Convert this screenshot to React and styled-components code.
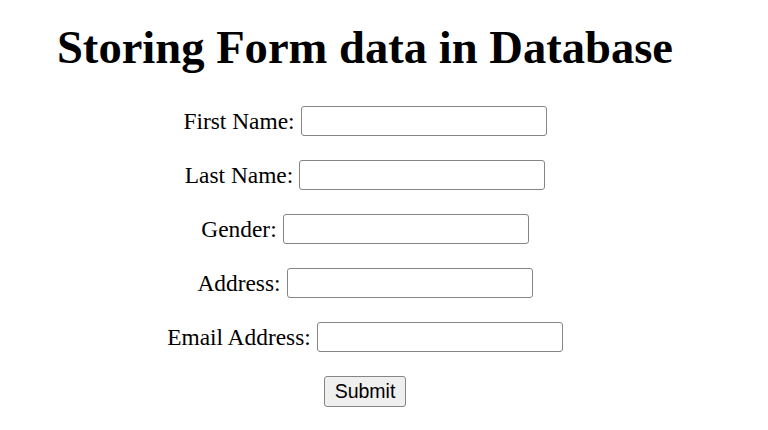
import React from 'react';
import styled, { createGlobalStyle } from 'styled-components';

const GlobalStyle = createGlobalStyle`
  body {
    margin: 0;
    background: #ffffff;
    font-family: 'Liberation Serif', 'Times New Roman', serif;
    color: #000000;
  }
`;

const Page = styled.div`
  width: 730px;
  padding-top: 24px;
  text-align: center;
`;

const Title = styled.h1`
  margin: 0 0 36px;
  font-size: 46.6px;
  line-height: 46px;
  font-weight: 700;
`;

const Form = styled.form`
  display: flex;
  flex-direction: column;
  align-items: center;
  gap: 24px;
`;

const Row = styled.div`
  display: flex;
  align-items: center;
  justify-content: center;
  gap: 6px;
  height: 30px;
`;

const Label = styled.label`
  font-size: 23.4px;
  line-height: 30px;
`;

const Input = styled.input`
  box-sizing: border-box;
  width: 246px;
  height: 30px;
  padding: 2px 4px;
  border: 1.5px solid #858585;
  border-radius: 3px;
  background: #ffffff;
  font-family: 'Liberation Sans', Arial, sans-serif;
  font-size: 19px;
`;

const Button = styled.button`
  box-sizing: border-box;
  width: 82px;
  height: 31px;
  padding: 0 8px;
  border: 1.5px solid #858585;
  border-radius: 3px;
  background: #efefef;
  color: #000000;
  font-family: 'Liberation Sans', Arial, sans-serif;
  font-size: 19.5px;
`;

const fields = [
  { id: 'first_name', label: 'First Name:' },
  { id: 'last_name', label: 'Last Name:' },
  { id: 'gender', label: 'Gender:' },
  { id: 'address', label: 'Address:' },
  { id: 'email', label: 'Email Address:' },
];

const App = () => {
  return (
    <Page>
      <GlobalStyle />
      <Title>Storing Form data in Database</Title>
      <Form onSubmit={e => e.preventDefault()}>
        {fields.map(field => (
          <Row key={field.id}>
            <Label htmlFor={field.id}>{field.label}</Label>
            <Input type="text" id={field.id} name={field.id} />
          </Row>
        ))}
        <Button type="submit">Submit</Button>
      </Form>
    </Page>
  );
};

export default App;
